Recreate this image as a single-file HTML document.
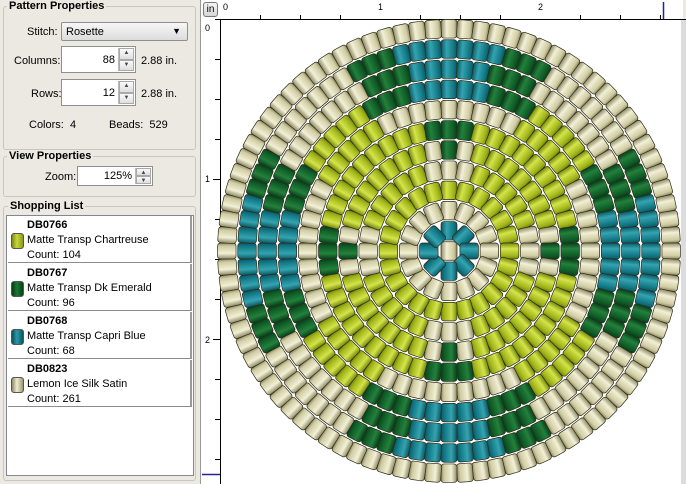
<!DOCTYPE html><html><head><meta charset="utf-8"><style>
body{margin:0;width:686px;height:484px;overflow:hidden;background:#ece9e3;font-family:"Liberation Sans",Arial,sans-serif;font-size:11px;color:#000;position:relative}
.a{position:absolute}
.gb{position:absolute;border:1px solid #c9c6bd;border-radius:3px}
.gt{position:absolute;background:#ece9e3;font-weight:bold;padding:0 2px}
.inp{position:absolute;background:#fff;border:1px solid #8e8f8f;box-sizing:border-box}
.spin{position:absolute;right:1px;top:1px;bottom:1px;width:15px;border-left:1px solid #bbb;background:#f2f2f2}
.spin div{height:50%;box-sizing:border-box;border:1px solid #a9a9a9;background:linear-gradient(#fafafa,#dedede);font-size:6px;text-align:center;color:#445;line-height:9px}
.item{position:absolute;left:8px;width:184px;height:47px;border-bottom:1px solid #8c8c8c;border-right:2px solid #9a9a9a;box-sizing:border-box;background:#fff}
.sw{position:absolute;left:3px;top:17px;width:11px;height:14px;border-radius:3px;border:1px solid #555}
.item b{position:absolute;left:19px;top:3px}
.item span{position:absolute;left:19px}
</style></head><body>
<div class="gb" style="left:3px;top:6px;width:191px;height:142px"></div>
<div class="gt" style="left:7px;top:0px">Pattern Properties</div>
<div class="a" style="left:27px;top:26px">Stitch:</div>
<div class="inp" style="left:61px;top:22px;width:127px;height:19px;border-radius:2px;background:linear-gradient(#f7f7f7,#dcdcdc)"><span class="a" style="left:4px;top:3px">Rosette</span><span class="a" style="right:6px;top:3px;font-size:9px">▼</span></div>
<div class="a" style="left:14px;top:55px">Columns:</div>
<div class="inp" style="left:61px;top:46px;width:75px;height:27px"><span class="a" style="right:20px;top:7px">88</span><div class="spin"><div>▲</div><div>▼</div></div></div>
<div class="a" style="left:141px;top:55px">2.88 in.</div>
<div class="a" style="left:31px;top:88px">Rows:</div>
<div class="inp" style="left:61px;top:79px;width:75px;height:27px"><span class="a" style="right:20px;top:7px">12</span><div class="spin"><div>▲</div><div>▼</div></div></div>
<div class="a" style="left:141px;top:88px">2.88 in.</div>
<div class="a" style="left:29px;top:119px">Colors:&nbsp; 4</div>
<div class="a" style="left:109px;top:119px">Beads:&nbsp; 529</div>
<div class="gb" style="left:3px;top:156px;width:191px;height:39px"></div>
<div class="gt" style="left:7px;top:150px">View Properties</div>
<div class="a" style="left:45px;top:171px">Zoom:</div>
<div class="inp" style="left:77px;top:166px;width:76px;height:20px"><span class="a" style="right:20px;top:3px">125%</span><div class="spin"><div>▲</div><div>▼</div></div></div>
<div class="gb" style="left:3px;top:206px;width:191px;height:273px"></div>
<div class="gt" style="left:8px;top:200px">Shopping List</div>
<div class="inp" style="left:6px;top:215px;width:188px;height:261px;border-color:#828790"></div>
<div class="item" style="top:216px"><div class="sw" style="background:linear-gradient(90deg,#7d8a10,#c8d640 45%,#8a9a10)"></div><b>DB0766</b><span style="top:18px">Matte Transp Chartreuse</span><span style="top:33px">Count: 104</span></div>
<div class="item" style="top:264px"><div class="sw" style="background:linear-gradient(90deg,#063d12,#1a7a32 45%,#064015)"></div><b>DB0767</b><span style="top:18px">Matte Transp Dk Emerald</span><span style="top:33px">Count: 96</span></div>
<div class="item" style="top:312px"><div class="sw" style="background:linear-gradient(90deg,#0a4f5c,#2a99a8 45%,#0a5560)"></div><b>DB0768</b><span style="top:18px">Matte Transp Capri Blue</span><span style="top:33px">Count: 68</span></div>
<div class="item" style="top:360px"><div class="sw" style="background:linear-gradient(90deg,#8d8a66,#efedcf 45%,#9a9670)"></div><b>DB0823</b><span style="top:18px">Lemon Ice Silk Satin</span><span style="top:33px">Count: 261</span></div>
<div class="a" style="left:200px;top:0;width:482px;height:484px;background:#fff;border-left:1px solid #999"></div>
<div class="a" style="left:681px;top:20px;width:5px;height:464px;background:#dcdcdc"></div>
<div class="a" style="left:203px;top:2px;width:15px;height:15px;border:1px solid #777;border-radius:3px;background:linear-gradient(#f4f4f4,#d6d6d6);box-sizing:border-box;font-size:10px;text-align:center;line-height:13px">in</div>
<svg class="a" style="left:0;top:0" width="686" height="484" id="s">
<defs id="d"></defs>
<line x1="220" y1="19.5" x2="686" y2="19.5" stroke="#000"/>
<line x1="220.5" y1="19" x2="220.5" y2="484" stroke="#000"/>
<line x1="663.5" y1="2" x2="663.5" y2="19" stroke="#22229a" stroke-width="1.5"/>
<line x1="202" y1="474.5" x2="220" y2="474.5" stroke="#22229a" stroke-width="1.5"/>
<g font-size="9" font-family="Liberation Sans,sans-serif">
<text x="223" y="10">0</text><text x="378" y="10">1</text><text x="538" y="10">2</text>
<text x="205" y="31">0</text><text x="205" y="182">1</text><text x="205" y="343">2</text>
</g>
<g id="t" stroke="#000"></g>
<g id="b"></g>
</svg>
<script>
var d=document.getElementById('d'),t=document.getElementById('t'),g=document.getElementById('b');
var C={c:['#8e8a64','#f2f0d6','#cfcba2'],l:['#75880c','#d4e44a','#a0b41a'],k:['#06401a','#24803c','#0e5a26'],u:['#0a5864','#34a4b0','#127684']};
var h='';for(var k in C){var c=C[k];h+='<linearGradient id="g'+k+'" x1="0" y1="0" x2="1" y2="0"><stop offset="0" stop-color="'+c[0]+'"/><stop offset="0.35" stop-color="'+c[1]+'"/><stop offset="0.8" stop-color="'+c[2]+'"/><stop offset="1" stop-color="'+c[0]+'"/></linearGradient>';}
d.innerHTML=h;
var th='';
for(var x=220;x<682;x+=40){if((x-220)%160)th+='<line x1="'+(x+0.5)+'" y1="15" x2="'+(x+0.5)+'" y2="19"/>';}
for(var y=19;y<484;y+=40){th+='<line x1="215" y1="'+(y+0.5)+'" x2="220" y2="'+(y+0.5)+'"/>';}
th+='<line x1="213" y1="179.5" x2="220" y2="179.5"/><line x1="213" y1="339.5" x2="220" y2="339.5"/>';
t.innerHTML=th;
function col(r,p){
 if(r==0||r==2||r==11)return'c';if(r==1)return'u';if(r==3)return'l';
 if(r==4)return p<15?'c':'l';
 if(r==5||r==6)return p<8?'k':(p<13?'c':'l');
 if(r==7)return p<30?'c':'l';
 if(r==8)return p<14?'u':(p<30?'k':'l');
 if(r==9)return p<14?'u':(p<30?'k':'c');
 if(r==10)return p<14?'u':(p<28?'k':'c');
}
var cx=449,cy=251,s='',W=16,H=18.5;
s+='<rect x="'+(cx-W/2)+'" y="'+(cy-H/2)+'" width="'+W+'" height="'+H+'" rx="3" fill="url(#gc)" stroke="#2e2c1a" stroke-width="0.7"/>';
for(var r=1;r<=11;r++){var n=8*r,R=20.2*r;
 for(var i=0;i<n;i++){var a=i*360/n,p=a%90;if(p>45)p=90-p;var k=col(r,p);
  s+='<rect transform="rotate('+a+' '+cx+' '+cy+')" x="'+(cx-W/2)+'" y="'+(cy-R-H/2)+'" width="'+W+'" height="'+H+'" rx="3" fill="url(#g'+k+')" stroke="#2e2c1a" stroke-width="0.7"/>';}}
g.innerHTML=s;
</script>
</body></html>
